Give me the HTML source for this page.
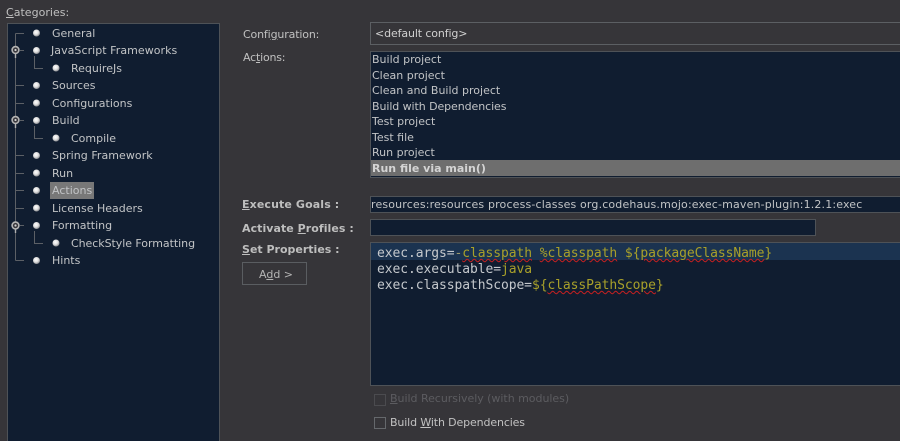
<!DOCTYPE html>
<html><head><meta charset="utf-8"><style>
html,body{margin:0;padding:0;width:900px;height:441px;overflow:hidden;background:#363539}
body{position:relative;font-family:"DejaVu Sans",sans-serif;font-size:11px;color:#c0c0c0}
.a{position:absolute;white-space:nowrap;line-height:14px}
.box{position:absolute;box-sizing:border-box;background:#101d30;border:1px solid #4e5257}
.t{position:absolute;white-space:nowrap;line-height:14px;color:#c2c4c6}
.l{position:absolute;left:372px;white-space:nowrap;line-height:14px;color:#c2c4c6}
.b{font-weight:bold;color:#bebebe}
.m{position:absolute;left:377px;font-family:"DejaVu Sans Mono","Liberation Mono",monospace;font-size:13px;letter-spacing:-0.08px;line-height:16px;white-space:pre;color:#c4c8cc}
.y{color:#a8a02a}.o{color:#9a9a70}
.w{text-decoration:underline wavy #c82020 1px;text-underline-offset:1px}
u{text-underline-offset:1px}
</style></head><body>
<div class="a" style="left:6px;top:6px;letter-spacing:0.02px"><u>C</u>ategories:</div>
<div class="box" style="left:7px;top:23px;width:213px;height:430px"></div>
<svg class="a" style="left:0;top:0" width="220" height="280" xmlns="http://www.w3.org/2000/svg">
<defs><radialGradient id="g" cx="0.42" cy="0.38" r="0.62"><stop offset="0" stop-color="#ffffff"/><stop offset="0.55" stop-color="#e0e0e0"/><stop offset="1" stop-color="#8a8c90"/></radialGradient></defs>
<g stroke="#5c6066" stroke-width="1" fill="none">
<path d="M15.5 33.5V260.5M15.5 33.5H24M20 50.5H24M34.5 56V68.5H43M15.5 85.5H24M15.5 103.5H24M20 120.5H24M34.5 126V138.5H43M15.5 155.5H24M15.5 173.5H24M15.5 190.5H24M15.5 208.5H24M20 225.5H24M34.5 231V243.5H43M15.5 260.5H24"/>
</g>
<g stroke="#b0b0b0" stroke-width="1.4"><path d="M15.5 54V58M15.5 124V128M15.5 229V233"/></g>
<g fill="#36353a" stroke="#b4b4b4" stroke-width="1.6">
<circle cx="15.5" cy="50" r="3.4"/><circle cx="15.5" cy="120" r="3.4"/><circle cx="15.5" cy="225.5" r="3.4"/>
</g>
<g fill="#d0d0d0"><circle cx="15.5" cy="50" r="1.1"/><circle cx="15.5" cy="120" r="1.1"/><circle cx="15.5" cy="225.5" r="1.1"/></g>
<g fill="url(#g)">
<circle cx="36.5" cy="33" r="3.5"/><circle cx="36.5" cy="50.5" r="3.5"/><circle cx="56" cy="68" r="3.5"/><circle cx="36.5" cy="85.5" r="3.5"/><circle cx="36.5" cy="103" r="3.5"/><circle cx="36.5" cy="120.5" r="3.5"/><circle cx="56" cy="138" r="3.5"/><circle cx="36.5" cy="155.5" r="3.5"/><circle cx="36.5" cy="173" r="3.5"/><circle cx="36.5" cy="190.5" r="3.5"/><circle cx="36.5" cy="208" r="3.5"/><circle cx="36.5" cy="225.5" r="3.5"/><circle cx="56" cy="243" r="3.5"/><circle cx="36.5" cy="260.5" r="3.5"/>
</g></svg>
<div class="t" style="left:52px;top:27px">General</div>
<div class="t" style="left:51px;top:44px;letter-spacing:0.05px">JavaScript Frameworks</div>
<div class="t" style="left:71px;top:62px">RequireJs</div>
<div class="t" style="left:52px;top:79px">Sources</div>
<div class="t" style="left:52px;top:97px">Configurations</div>
<div class="t" style="left:52px;top:114px">Build</div>
<div class="t" style="left:71px;top:132px">Compile</div>
<div class="t" style="left:52px;top:149px;letter-spacing:0.05px">Spring Framework</div>
<div class="t" style="left:52px;top:167px">Run</div>
<div class="a" style="left:50px;top:182px;width:44px;height:17px;background:#787878"></div>
<div class="t" style="left:52px;top:184px">Actions</div>
<div class="t" style="left:52px;top:202px">License Headers</div>
<div class="t" style="left:52px;top:219px">Formatting</div>
<div class="t" style="left:71px;top:237px;letter-spacing:-0.05px">CheckStyle Formatting</div>
<div class="t" style="left:52px;top:254px">Hints</div>

<div class="a" style="left:243px;top:28px;letter-spacing:-0.15px">Confi<u>g</u>uration:</div>
<div class="a" style="left:243px;top:51px;letter-spacing:-0.2px">Ac<u>t</u>ions:</div>
<div class="box" style="left:370px;top:22px;width:540px;height:23px;background:#363539;border-color:#5c5f63"></div>
<div class="a" style="left:375px;top:27px;color:#d0d0d0;letter-spacing:-0.12px">&lt;default config&gt;</div>
<div class="box" style="left:370px;top:51px;width:540px;height:127px"></div>
<div class="a" style="left:371px;top:160px;width:529px;height:16px;background:#6e6e6e"></div>
<div class="l" style="top:53px">Build project</div>
<div class="l" style="top:69px">Clean project</div>
<div class="l" style="top:84px">Clean and Build project</div>
<div class="l" style="top:100px;letter-spacing:-0.08px">Build with Dependencies</div>
<div class="l" style="top:115px">Test project</div>
<div class="l" style="top:131px">Test file</div>
<div class="l" style="top:146px">Run project</div>
<div class="l" style="top:162px;font-weight:bold;color:#d4d4d4">Run file via main()</div>

<div class="a b" style="left:242px;top:198px;letter-spacing:0.12px"><u>E</u>xecute Goals :</div>
<div class="a b" style="left:242px;top:222px;letter-spacing:0.05px">Activate <u>P</u>rofiles :</div>
<div class="a b" style="left:242px;top:243px"><u>S</u>et Properties :</div>
<div class="box" style="left:370px;top:196px;width:540px;height:17px"></div>
<div class="a" style="left:371px;top:198px;color:#c2c4c6;letter-spacing:0.158px">resources:resources process-classes org.codehaus.mojo:exec-maven-plugin:1.2.1:exec</div>
<div class="box" style="left:370px;top:219px;width:446px;height:17px"></div>
<div class="box" style="left:242px;top:262px;width:65px;height:23px;background:#363539;border-color:#5a5d61"></div>
<div class="a" style="left:259px;top:268px;color:#b4b4b4">A<u>d</u>d &gt;</div>
<div class="box" style="left:370px;top:242px;width:540px;height:144px"></div>
<div class="a" style="left:371px;top:243px;width:529px;height:17px;background:#1b3350"></div>
<div class="m" style="top:246px">exec.args=<span class="o">-</span><span class="y w">classpath</span> <span class="y w">%classpath</span> <span class="y">$</span><span class="y">{</span><span class="y w">packageClassName</span><span class="y">}</span></div>
<div class="m" style="top:262px">exec.executable=<span class="y">java</span></div>
<div class="m" style="top:278px">exec.classpathScope=<span class="y">$</span><span class="y">{</span><span class="y w">classPathScope</span><span class="y">}</span></div>

<div class="a" style="left:374px;top:394px;width:10px;height:10px;border:1px solid #4b4b4f"></div>
<div class="a" style="left:390px;top:392px;color:#5c5c60;letter-spacing:-0.03px"><u>B</u>uild Recursively (with modules)</div>
<div class="a" style="left:374px;top:417px;width:10px;height:10px;border:1px solid #65686c"></div>
<div class="a" style="left:390px;top:416px;color:#c2c2c2;letter-spacing:-0.13px">Build <u>W</u>ith Dependencies</div>
</body></html>
